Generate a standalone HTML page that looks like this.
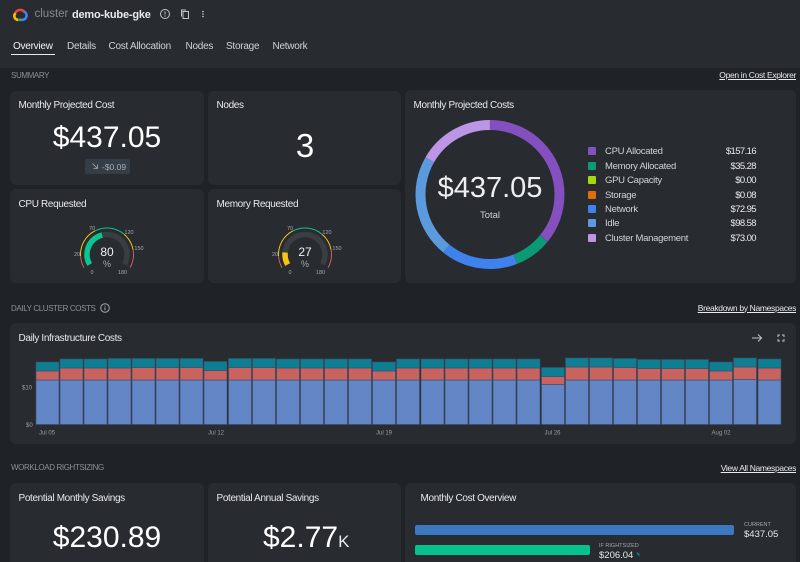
<!DOCTYPE html>
<html><head><meta charset="utf-8"><style>
html,body{margin:0;padding:0;background:#1f2226;width:800px;height:562px;overflow:hidden}
body{position:relative;font-family:"Liberation Sans",sans-serif;color:#e8eaed}
#w{position:absolute;left:0;top:0;width:800px;height:562px;overflow:hidden}
.t{position:absolute;white-space:nowrap;line-height:1}
.card{position:absolute;background:#282b2f;border-radius:6px}
.h{font-size:10px;letter-spacing:-.35px;color:#e8eaed}
.sec{font-size:8px;letter-spacing:-.38px;color:#8c9095}
.lnk{font-size:8.5px;letter-spacing:-.33px;color:#e8eaed;text-decoration:underline}
.tab{font-size:10px;letter-spacing:-.25px;color:#d0d3d6;top:42px}
.lg{font-size:9.500px;letter-spacing:-.28px;color:#d0d3d6}
.val{font-size:9.500px;letter-spacing:-.6px;color:#e8eaed;text-align:right;width:60px;left:696px}
.sw{position:absolute;left:588px;width:8px;height:8px;border-radius:1px}
svg{position:absolute;left:0;top:0}
</style></head><body><div id="w">
<div style="position:absolute;left:0;top:0;width:800px;height:68px;background:#282b2f"></div>

<svg width="800" height="562" viewBox="0 0 800 562" fill="none">
<path d="M15.500 12.500A5.600 5.600 0 0 1 24.800 12.300" stroke="#ea4335" stroke-width="2.600"/>
<path d="M24 11.500A4.400 4.400 0 0 1 23 19.800H20" stroke="#4285f4" stroke-width="2.600"/>
<path d="M21 19.800H17.500" stroke="#34a853" stroke-width="2.600"/>
<path d="M18 19.800A3.800 3.800 0 0 1 15.800 13" stroke="#fbbc04" stroke-width="2.600"/>
<circle cx="165" cy="14" r="4.500" stroke="#c4c7ca" stroke-width="1"/><path d="M165 11.500v3M165 15.500v1" stroke="#c4c7ca"/>
<rect x="183" y="11.500" width="5.500" height="7" stroke="#c4c7ca"/><path d="M181.500 16.500V10H186" stroke="#c4c7ca"/>
<circle cx="203" cy="11.500" r=".8" fill="#d5d7da"/><circle cx="203" cy="14" r=".8" fill="#d5d7da"/><circle cx="203" cy="16.500" r=".8" fill="#d5d7da"/>
</svg>
<div class="t" style="left:34.500px;top:9px;font-size:11.500px;color:#85898e">cluster</div>
<div class="t" style="left:72px;top:9.500px;font-size:11px;letter-spacing:-.2px;font-weight:bold;color:#e8eaed">demo-kube-gke</div>
<div class="t tab" style="left:13px;color:#f1f3f4">Overview</div>
<div class="t tab" style="left:67px">Details</div>
<div class="t tab" style="left:108.500px">Cost Allocation</div>
<div class="t tab" style="left:185.500px">Nodes</div>
<div class="t tab" style="left:226px">Storage</div>
<div class="t tab" style="left:272.500px">Network</div>
<div style="position:absolute;left:11px;top:53.500px;width:44px;height:1.500px;background:#e8eaed"></div>

<div class="t sec" style="left:11px;top:72px">SUMMARY</div>
<div class="t lnk" style="right:4px;top:71px">Open in Cost Explorer</div>

<div class="card" style="left:10px;top:91px;width:194px;height:94px"></div>
<div class="card" style="left:208px;top:91px;width:193px;height:94px"></div>
<div class="card" style="left:10px;top:189px;width:194px;height:94px"></div>
<div class="card" style="left:208px;top:189px;width:193px;height:94px"></div>
<div class="card" style="left:405px;top:90px;width:391px;height:193px"></div>

<div class="t h" style="left:18.500px;top:101px">Monthly Projected Cost</div>
<div class="t" style="left:10px;width:194px;text-align:center;top:123px;font-size:30px;color:#fff">$437.05</div>
<div style="position:absolute;left:85px;top:159px;width:45px;height:15px;background:#353e46;border-radius:2px"></div>
<div class="t" style="left:102px;top:162.500px;font-size:8.500px;color:#a8adb2">-$0.09</div>
<svg width="800" height="562" fill="none"><path d="M92.500 163.500l4.500 4.500M97.500 164.500V168.500H93.500" stroke="#a8adb2" stroke-width=".8"/></svg>
<div class="t h" style="left:216.500px;top:101px">Nodes</div>
<div class="t" style="left:208px;width:194px;text-align:center;top:128.500px;font-size:33px;color:#fff">3</div>
<div class="t h" style="left:18.500px;top:200px">CPU Requested</div>
<div class="t h" style="left:216.500px;top:200px">Memory Requested</div>

<svg width="800" height="562" fill="none">
<g transform="translate(107 254.500)">
<g stroke-width="1">
<circle r="26.500" pathLength="360" stroke="#c9605c" stroke-dasharray="26.7 360" transform="rotate(-210)"/>
<circle r="26.500" pathLength="360" stroke="#f5c518" stroke-dasharray="66.7 360" transform="rotate(-183.300)"/>
<circle r="26.500" pathLength="360" stroke="#0bc48f" stroke-dasharray="66.700 360" transform="rotate(-116.700)"/>
<circle r="26.500" pathLength="360" stroke="#f5c518" stroke-dasharray="40 360" transform="rotate(-50)"/>
<circle r="26.500" pathLength="360" stroke="#c9605c" stroke-dasharray="40 360" transform="rotate(-10)"/>
</g>
<circle r="20" pathLength="360" stroke="#3a3d41" stroke-width="5.500" stroke-dasharray="240 360" transform="rotate(-210)"/>
<circle r="20" pathLength="360" stroke="#0bc48f" stroke-width="5.500" stroke-dasharray="106.700 360" transform="rotate(-210)"/>
</g>
<g transform="translate(305 254.500)">
<g stroke-width="1">
<circle r="26.500" pathLength="360" stroke="#c9605c" stroke-dasharray="26.7 360" transform="rotate(-210)"/>
<circle r="26.500" pathLength="360" stroke="#f5c518" stroke-dasharray="66.7 360" transform="rotate(-183.300)"/>
<circle r="26.500" pathLength="360" stroke="#0bc48f" stroke-dasharray="66.700 360" transform="rotate(-116.700)"/>
<circle r="26.500" pathLength="360" stroke="#f5c518" stroke-dasharray="40 360" transform="rotate(-50)"/>
<circle r="26.500" pathLength="360" stroke="#c9605c" stroke-dasharray="40 360" transform="rotate(-10)"/>
</g>
<circle r="20" pathLength="360" stroke="#3a3d41" stroke-width="5.500" stroke-dasharray="240 360" transform="rotate(-210)"/>
<circle r="20" pathLength="360" stroke="#f5c518" stroke-width="5.500" stroke-dasharray="36 360" transform="rotate(-210)"/>
</g>
<g font-family="Liberation Sans" font-size="5.500" fill="#a4a8ac" text-anchor="middle">
<text x="92" y="274">0</text><text x="122.500" y="274">180</text><text x="77" y="256">20</text><text x="92" y="230">70</text><text x="129" y="234">120</text><text x="139" y="250">150</text>
<text x="290" y="274">0</text><text x="320.500" y="274">180</text><text x="275" y="256">20</text><text x="290" y="230">70</text><text x="327" y="234">120</text><text x="337" y="250">150</text>
</g>
<g font-family="Liberation Sans" text-anchor="middle">
<text x="107" y="256" font-size="12" fill="#f1f3f4">80</text><text x="107" y="267" font-size="9" fill="#a4a8ac">%</text>
<text x="305" y="256" font-size="12" fill="#f1f3f4">27</text><text x="305" y="267" font-size="9" fill="#a4a8ac">%</text>
</g>

<g transform="translate(490 194.500)" stroke-width="10">
<circle r="69.500" pathLength="360" stroke="#8450bf" stroke-dasharray="129.5 360" transform="rotate(-90)"/>
<circle r="69.500" pathLength="360" stroke="#0a9a76" stroke-dasharray="29.1 360" transform="rotate(39.500)"/>
<circle r="69.500" pathLength="360" stroke="#3f82ee" stroke-dasharray="60.2 360" transform="rotate(68.600)"/>
<circle r="69.500" pathLength="360" stroke="#5c9ade" stroke-dasharray="81.1 360" transform="rotate(128.800)"/>
<circle r="69.500" pathLength="360" stroke="#bd95e6" stroke-dasharray="60.1 360" transform="rotate(209.900)"/>
</g>
</svg>

<div class="t h" style="left:413.500px;top:101px">Monthly Projected Costs</div>
<div class="t" style="left:420px;width:140px;text-align:center;top:174px;font-size:29px;color:#eceef0">$437.05</div>
<div class="t" style="left:420px;width:140px;text-align:center;top:210.500px;font-size:9.500px;color:#d0d3d6">Total</div>

<div class="sw" style="top:147px;background:#8450bf"></div><div class="t lg" style="left:605px;top:147px">CPU Allocated</div><div class="t val" style="top:147px">$157.16</div>
<div class="sw" style="top:161.500px;background:#0a9a76"></div><div class="t lg" style="left:605px;top:161.500px">Memory Allocated</div><div class="t val" style="top:161.500px">$35.28</div>
<div class="sw" style="top:176px;background:#a4d80c"></div><div class="t lg" style="left:605px;top:176px">GPU Capacity</div><div class="t val" style="top:176px">$0.00</div>
<div class="sw" style="top:190.500px;background:#e26b0a"></div><div class="t lg" style="left:605px;top:190.500px">Storage</div><div class="t val" style="top:190.500px">$0.08</div>
<div class="sw" style="top:205px;background:#3f82ee"></div><div class="t lg" style="left:605px;top:205px">Network</div><div class="t val" style="top:205px">$72.95</div>
<div class="sw" style="top:219px;background:#5c9ade"></div><div class="t lg" style="left:605px;top:219px">Idle</div><div class="t val" style="top:219px">$98.58</div>
<div class="sw" style="top:233.500px;background:#bd95e6"></div><div class="t lg" style="left:605px;top:233.500px">Cluster Management</div><div class="t val" style="top:233.500px">$73.00</div>

<div class="t sec" style="left:11px;top:304.500px">DAILY CLUSTER COSTS</div>
<svg width="800" height="562" fill="none"><circle cx="105" cy="308" r="4.300" stroke="#a4a8ac"/><path d="M105 305.500v1M105 307.300v3" stroke="#a4a8ac"/></svg>
<div class="t lnk" style="right:4px;top:303.500px">Breakdown by Namespaces</div>

<div class="card" style="left:10px;top:323px;width:786px;height:121px"></div>
<div class="t h" style="left:18.500px;top:334px">Daily Infrastructure Costs</div>
<svg width="800" height="562" fill="none">
<path d="M752 338h9M758 334.500l3.500 3.500-3.500 3.500" stroke="#c4c7ca"/>
<path d="M778 337v-2h2M782 335h2v2M784 339v2h-2M780 341h-2v-2" stroke="#c4c7ca"/>
</svg>
<svg id="c" width="800" height="562">
<g stroke="#3b4c68" stroke-width=".6">
<rect x="36" y="380" width="23" height="44.500" fill="#6387c6"/><rect x="36" y="371" width="23" height="9" fill="#c96360"/><rect x="36" y="362" width="23" height="9" fill="#0e7f93"/>
<rect x="60" y="380" width="23" height="44.500" fill="#6387c6"/><rect x="60" y="368" width="23" height="12" fill="#c96360"/><rect x="60" y="359" width="23" height="9" fill="#0e7f93"/>
<rect x="84" y="380" width="23" height="44.500" fill="#6387c6"/><rect x="84" y="368" width="23" height="12" fill="#c96360"/><rect x="84" y="359" width="23" height="9" fill="#0e7f93"/>
<rect x="108" y="380" width="23" height="44.500" fill="#6387c6"/><rect x="108" y="368" width="23" height="12" fill="#c96360"/><rect x="108" y="358.500" width="23" height="9.500" fill="#0e7f93"/>
<rect x="132" y="380" width="23" height="44.500" fill="#6387c6"/><rect x="132" y="367.500" width="23" height="12.500" fill="#c96360"/><rect x="132" y="358.500" width="23" height="9" fill="#0e7f93"/>
<rect x="156" y="380" width="23" height="44.500" fill="#6387c6"/><rect x="156" y="367.500" width="23" height="12.500" fill="#c96360"/><rect x="156" y="358.500" width="23" height="9" fill="#0e7f93"/>
<rect x="180" y="380" width="23" height="44.500" fill="#6387c6"/><rect x="180" y="367.500" width="23" height="12.500" fill="#c96360"/><rect x="180" y="358.500" width="23" height="9" fill="#0e7f93"/>
<rect x="204" y="380" width="23" height="44.500" fill="#6387c6"/><rect x="204" y="370.500" width="23" height="9.500" fill="#c96360"/><rect x="204" y="361.500" width="23" height="9" fill="#0e7f93"/>
<rect x="228.500" y="380" width="23" height="44.500" fill="#6387c6"/><rect x="228.500" y="367.500" width="23" height="12.500" fill="#c96360"/><rect x="228.500" y="358.500" width="23" height="9" fill="#0e7f93"/>
<rect x="252.500" y="380" width="23" height="44.500" fill="#6387c6"/><rect x="252.500" y="367.500" width="23" height="12.500" fill="#c96360"/><rect x="252.500" y="358.500" width="23" height="9" fill="#0e7f93"/>
<rect x="276.500" y="380" width="23" height="44.500" fill="#6387c6"/><rect x="276.500" y="368" width="23" height="12" fill="#c96360"/><rect x="276.500" y="359" width="23" height="9" fill="#0e7f93"/>
<rect x="300.500" y="380" width="23" height="44.500" fill="#6387c6"/><rect x="300.500" y="368" width="23" height="12" fill="#c96360"/><rect x="300.500" y="359" width="23" height="9" fill="#0e7f93"/>
<rect x="324.500" y="380" width="23" height="44.500" fill="#6387c6"/><rect x="324.500" y="368" width="23" height="12" fill="#c96360"/><rect x="324.500" y="359" width="23" height="9" fill="#0e7f93"/>
<rect x="348.500" y="380" width="23" height="44.500" fill="#6387c6"/><rect x="348.500" y="368" width="23" height="12" fill="#c96360"/><rect x="348.500" y="359" width="23" height="9" fill="#0e7f93"/>
<rect x="372.500" y="380" width="23" height="44.500" fill="#6387c6"/><rect x="372.500" y="371" width="23" height="9" fill="#c96360"/><rect x="372.500" y="362" width="23" height="9" fill="#0e7f93"/>
<rect x="396.500" y="380" width="23" height="44.500" fill="#6387c6"/><rect x="396.500" y="368" width="23" height="12" fill="#c96360"/><rect x="396.500" y="359" width="23" height="9" fill="#0e7f93"/>
<rect x="421" y="380" width="23" height="44.500" fill="#6387c6"/><rect x="421" y="368" width="23" height="12" fill="#c96360"/><rect x="421" y="359" width="23" height="9" fill="#0e7f93"/>
<rect x="445" y="380" width="23" height="44.500" fill="#6387c6"/><rect x="445" y="368" width="23" height="12" fill="#c96360"/><rect x="445" y="359" width="23" height="9" fill="#0e7f93"/>
<rect x="469" y="380" width="23" height="44.500" fill="#6387c6"/><rect x="469" y="368" width="23" height="12" fill="#c96360"/><rect x="469" y="359" width="23" height="9" fill="#0e7f93"/>
<rect x="493" y="380" width="23" height="44.500" fill="#6387c6"/><rect x="493" y="368" width="23" height="12" fill="#c96360"/><rect x="493" y="359" width="23" height="9" fill="#0e7f93"/>
<rect x="517" y="380" width="23" height="44.500" fill="#6387c6"/><rect x="517" y="368" width="23" height="12" fill="#c96360"/><rect x="517" y="359" width="23" height="9" fill="#0e7f93"/>
<rect x="541.500" y="384.500" width="23" height="40" fill="#6387c6"/><rect x="541.500" y="376.500" width="23" height="8" fill="#c96360"/><rect x="541.500" y="367.500" width="23" height="9" fill="#0e7f93"/>
<rect x="565.500" y="380" width="23" height="44.500" fill="#6387c6"/><rect x="565.500" y="367" width="23" height="13" fill="#c96360"/><rect x="565.500" y="358" width="23" height="9" fill="#0e7f93"/>
<rect x="589.500" y="380" width="23" height="44.500" fill="#6387c6"/><rect x="589.500" y="367" width="23" height="13" fill="#c96360"/><rect x="589.500" y="358" width="23" height="9" fill="#0e7f93"/>
<rect x="613.500" y="380" width="23" height="44.500" fill="#6387c6"/><rect x="613.500" y="367.500" width="23" height="12.500" fill="#c96360"/><rect x="613.500" y="358.500" width="23" height="9" fill="#0e7f93"/>
<rect x="637.500" y="380" width="23" height="44.500" fill="#6387c6"/><rect x="637.500" y="368.500" width="23" height="11.500" fill="#c96360"/><rect x="637.500" y="359.500" width="23" height="9" fill="#0e7f93"/>
<rect x="661.500" y="380" width="23" height="44.500" fill="#6387c6"/><rect x="661.500" y="368.500" width="23" height="11.500" fill="#c96360"/><rect x="661.500" y="359.500" width="23" height="9" fill="#0e7f93"/>
<rect x="685.500" y="380" width="23" height="44.500" fill="#6387c6"/><rect x="685.500" y="368.500" width="23" height="11.500" fill="#c96360"/><rect x="685.500" y="359.500" width="23" height="9" fill="#0e7f93"/>
<rect x="709.500" y="380" width="23" height="44.500" fill="#6387c6"/><rect x="709.500" y="371" width="23" height="9" fill="#c96360"/><rect x="709.500" y="362" width="23" height="9" fill="#0e7f93"/>
<rect x="733.500" y="379.500" width="23" height="45" fill="#6387c6"/><rect x="733.500" y="367" width="23" height="12.500" fill="#c96360"/><rect x="733.500" y="358" width="23" height="9" fill="#0e7f93"/>
<rect x="758" y="380" width="23" height="44.500" fill="#6387c6"/><rect x="758" y="368" width="23" height="12" fill="#c96360"/><rect x="758" y="359" width="23" height="9" fill="#0e7f93"/>
</g>
<g font-family="Liberation Sans" font-size="6" fill="#9a9ea3">
<text x="22" y="389.500">$10</text><text x="26" y="427">$0</text>
<g text-anchor="middle"><text x="47" y="434.500">Jul 05</text><text x="216" y="434.500">Jul 12</text><text x="384" y="434.500">Jul 19</text><text x="552.500" y="434.500">Jul 26</text><text x="721" y="434.500">Aug 02</text></g>
</g>
</svg>

<div class="t sec" style="left:11px;top:464px">WORKLOAD RIGHTSIZING</div>
<div class="t lnk" style="right:4px;top:463.500px">View All Namespaces</div>
<div class="card" style="left:10px;top:483px;width:194px;height:90px"></div>
<div class="card" style="left:208px;top:483px;width:193px;height:90px"></div>
<div class="card" style="left:405px;top:483px;width:391px;height:90px"></div>
<div class="t h" style="left:18.500px;top:494px">Potential Monthly Savings</div>
<div class="t" style="left:10px;width:194px;text-align:center;top:523px;font-size:30px;color:#fff">$230.89</div>
<div class="t h" style="left:216.500px;top:494px">Potential Annual Savings</div>
<div class="t" style="left:263px;top:523px;font-size:30px;color:#fff">$2.77<span style="font-size:17px;color:#e8eaed">K</span></div>
<div class="t h" style="left:420.500px;top:494px">Monthly Cost Overview</div>
<div style="position:absolute;left:415px;top:524.500px;width:319px;height:10px;background:#3b78c0;border-radius:2px"></div>
<div style="position:absolute;left:415px;top:545px;width:174.500px;height:10px;background:#06c28f;border-radius:2px"></div>
<div class="t" style="left:744px;top:523px;font-size:5.500px;color:#a4a8ac">CURRENT</div>
<div class="t" style="left:744px;top:530px;font-size:9.500px;color:#e8eaed">$437.05</div>
<div class="t" style="left:599px;top:543.500px;font-size:5.500px;color:#a4a8ac">IF RIGHTSIZED</div>
<div class="t" style="left:599px;top:550.500px;font-size:9.500px;color:#e8eaed">$206.04</div>
<svg width="800" height="562" fill="none"><path d="M637 552.500l2.500 3" stroke="#0e7f93" stroke-width="1.500"/></svg>
</div></body></html>
